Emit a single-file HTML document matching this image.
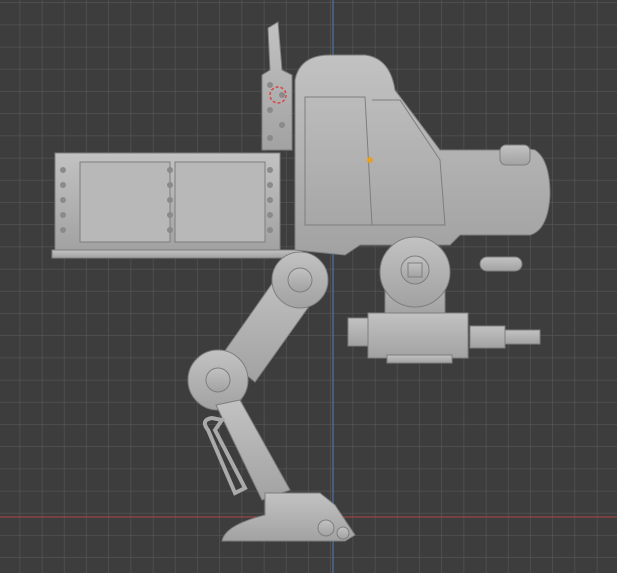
<!DOCTYPE html>
<html><head><style>
html,body{margin:0;padding:0;background:#3d3d3d;width:617px;height:573px;overflow:hidden}
</style></head><body>
<svg width="617" height="573" viewBox="0 0 617 573" xmlns="http://www.w3.org/2000/svg">
<defs>
<pattern id="g" x="-2" y="3" width="22.2" height="22.2" patternUnits="userSpaceOnUse">
<path d="M22.2 0V22.2M0 22.2H22.2" stroke="#575757" stroke-width="1.2" fill="none"/>
</pattern>
<linearGradient id="m" x1="0" y1="0" x2="0" y2="1"><stop offset="0" stop-color="#c2c2c2"/><stop offset="1" stop-color="#a2a2a2"/></linearGradient>
</defs>
<rect width="617" height="573" fill="#3d3d3d"/>
<rect width="617" height="573" fill="url(#g)"/>
<line x1="333" y1="0" x2="333" y2="573" stroke="#4b6a90" stroke-width="1.5"/>
<line x1="0" y1="517" x2="617" y2="517" stroke="#9a4444" stroke-width="1.2"/>
<g fill="url(#m)" stroke="#7e7e7e" stroke-width="1">
<path d="M268 28 L278 22 L282 70 L292 75 L292 150 L262 150 L262 75 L270 70 Z"/>
<rect x="55" y="153" width="225" height="97"/>
<rect x="80" y="162" width="90" height="80" fill="#b8b8b8"/>
<rect x="175" y="162" width="90" height="80" fill="#b8b8b8"/>
<rect x="52" y="250" width="250" height="8"/>
<path d="M295 150 L295 80 Q300 55 330 55 L365 55 Q390 58 395 90 L440 150 L500 150 L505 145 L535 150 Q550 160 550 195 Q548 230 530 235 L460 235 L450 245 L360 245 L345 255 L295 250 Z"/>
<path d="M305 97 L365 97 L372 225 L305 225 Z" fill="none"/>
<path d="M372 100 L400 100 L440 160 L445 225 L372 225" fill="none"/>
<rect x="500" y="145" width="30" height="20" rx="6"/>
<rect x="480" y="257" width="42" height="14" rx="7"/>
<rect x="385" y="265" width="60" height="50"/>
<circle cx="415" cy="272" r="35"/>
<circle cx="415" cy="270" r="14"/>
<rect x="408" y="263" width="14" height="14"/>
<rect x="348" y="318" width="25" height="28"/>
<rect x="368" y="313" width="100" height="45"/>
<rect x="387" y="355" width="65" height="8"/>
<rect x="470" y="326" width="35" height="22"/>
<rect x="505" y="330" width="35" height="14"/>
<path d="M283 268 L315 298 L255 382 L222 355 Z"/>
<circle cx="300" cy="280" r="28"/>
<circle cx="300" cy="280" r="12"/>
<circle cx="218" cy="380" r="30"/>
<circle cx="218" cy="380" r="12"/>
<path d="M216 405 L240 400 L290 490 L262 500 Z"/>
<path d="M208 430 Q200 420 212 418 L222 420 L215 430 L245 488 L235 493 Z" fill="none" stroke="#aaa" stroke-width="4"/>
<path d="M265 493 L320 493 L335 505 L355 535 L345 541 L222 541 Q225 525 265 515 Z"/>
<circle cx="326" cy="528" r="8"/>
<circle cx="343" cy="533" r="6"/>
</g>
<g fill="#8a8a8a">
<circle cx="63" cy="170" r="3"/><circle cx="63" cy="185" r="3"/><circle cx="63" cy="200" r="3"/><circle cx="63" cy="215" r="3"/><circle cx="63" cy="230" r="3"/>
<circle cx="170" cy="170" r="3"/><circle cx="170" cy="185" r="3"/><circle cx="170" cy="200" r="3"/><circle cx="170" cy="215" r="3"/><circle cx="170" cy="230" r="3"/>
<circle cx="270" cy="170" r="3"/><circle cx="270" cy="185" r="3"/><circle cx="270" cy="200" r="3"/><circle cx="270" cy="215" r="3"/><circle cx="270" cy="230" r="3"/>
<circle cx="270" cy="85" r="3"/><circle cx="282" cy="95" r="3"/><circle cx="270" cy="110" r="3"/><circle cx="282" cy="125" r="3"/><circle cx="270" cy="138" r="3"/>
</g>
<circle cx="278" cy="95" r="8" fill="none" stroke="#d44" stroke-width="1.5" stroke-dasharray="3 2"/>
<circle cx="370" cy="160" r="3" fill="#e8a020"/>
</svg>
</body></html>
